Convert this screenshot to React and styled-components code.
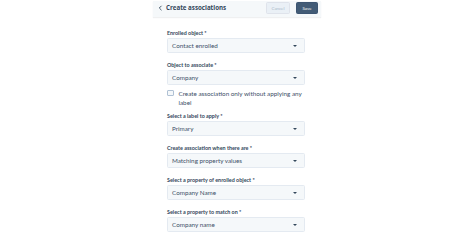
import React from "react";
import styled, { createGlobalStyle } from "styled-components";

const Global = createGlobalStyle`
  html, body { margin: 0; padding: 0; background: #ffffff; }
  body { font-family: "Lato", "Open Sans", sans-serif; color: #33475b; }
`;

const Page = styled.div`
  display: flex;
  justify-content: center;
  padding-top: 1px;
`;

const Panel = styled.div`
  width: 168px;
  display: flex;
  flex-direction: column;
`;

const Header = styled.div`
  height: 16px;
  box-sizing: border-box;
  background: #f5f8fa;
  display: flex;
  align-items: flex-start;
  padding: 1px 3px 0 5px;
  box-shadow: 0 1px 1px rgba(45, 62, 80, 0.08);
`;

const Back = styled.span`
  height: 12px;
  margin-right: 3px;
  display: flex;
  align-items: center;
`;

const Title = styled.div`
  height: 12px;
  line-height: 12px;
  font-family: "Open Sans", "Lato", sans-serif;
  font-size: 6.2px;
  font-weight: 700;
  color: #33475b;
  flex: 1;
`;

const Button = styled.button`
  height: 12px;
  padding: 0;
  margin-left: ${(p) => (p.$primary ? "6px" : "0")};
  font-family: inherit;
  font-size: 4.4px;
  border-radius: 1.5px;
  border: 0.6px solid ${(p) => (p.$primary ? "#3d5572" : "#dfe3eb")};
  background: ${(p) => (p.$primary ? "#425b76" : "#eaf0f6")};
  color: ${(p) => (p.$primary ? "#ffffff" : "#a9b9c9")};
  width: ${(p) => (p.$primary ? "22px" : "24px")};
`;

const Form = styled.div`
  padding: 12px 0 0 14px;
  display: flex;
  flex-direction: column;
`;

const Field = styled.div`
  display: flex;
  flex-direction: column;
  margin-bottom: ${(p) => p.$mb ?? 8}px;
`;

const Label = styled.div`
  font-size: 5.4px;
  font-weight: 700;
  color: #33475b;
  height: 9px;
  line-height: 8px;
`;

const Select = styled.div`
  width: 138px;
  height: 15px;
  box-sizing: border-box;
  background: #f5f8fa;
  border: 0.5px solid #e4eaf1;
  border-radius: 1.5px;
  display: flex;
  align-items: center;
  justify-content: space-between;
  padding: 0 7px 0 4px;
  font-size: 6.3px;
  color: #3d5068;
`;

const Caret = styled.span`
  width: 0;
  height: 0;
  border-left: 2px solid transparent;
  border-right: 2px solid transparent;
  border-top: 2.2px solid #33475b;
`;

const CheckRow = styled.div`
  display: flex;
  align-items: flex-start;
  margin-top: 3.5px;
  margin-bottom: 5.5px;
`;

const Box = styled.span`
  width: 6.5px;
  height: 6.5px;
  box-sizing: border-box;
  border: 0.6px solid #b0c1d4;
  border-radius: 1px;
  background: #f5f8fa;
  margin-right: 5px;
  margin-top: 1px;
  flex-shrink: 0;
`;

const CheckText = styled.div`
  font-size: 6.3px;
  line-height: 9px;
  color: #3d5068;
  width: 128px;
`;

const SelectField = ({ label, value, mb }) => (
  <Field $mb={mb}>
    <Label>{label}</Label>
    <Select>
      <span>{value}</span>
      <Caret />
    </Select>
  </Field>
);

export default function App() {
  return (
    <>
      <Global />
      <Page>
        <Panel>
          <Header>
            <Back>
              <svg width="5" height="6" viewBox="0 0 5 6">
                <path d="M3.5 0.8 L1.3 3 L3.5 5.2" fill="none" stroke="#33475b" strokeWidth="0.9" />
              </svg>
            </Back>
            <Title>Create associations</Title>
            <Button>Cancel</Button>
            <Button $primary>Save</Button>
          </Header>
          <Form>
            <SelectField label="Enrolled object *" value="Contact enrolled" />
            <Field $mb={0}>
              <Label>Object to associate *</Label>
              <Select>
                <span>Company</span>
                <Caret />
              </Select>
            </Field>
            <CheckRow>
              <Box />
              <CheckText>Create association only without applying any label</CheckText>
            </CheckRow>
            <SelectField label="Select a label to apply *" value="Primary" />
            <SelectField label="Create association when there are *" value="Matching property values" />
            <SelectField label="Select a property of enrolled object *" value="Company Name" />
            <SelectField label="Select a property to match on *" value="Company name" />
          </Form>
        </Panel>
      </Page>
    </>
  );
}
